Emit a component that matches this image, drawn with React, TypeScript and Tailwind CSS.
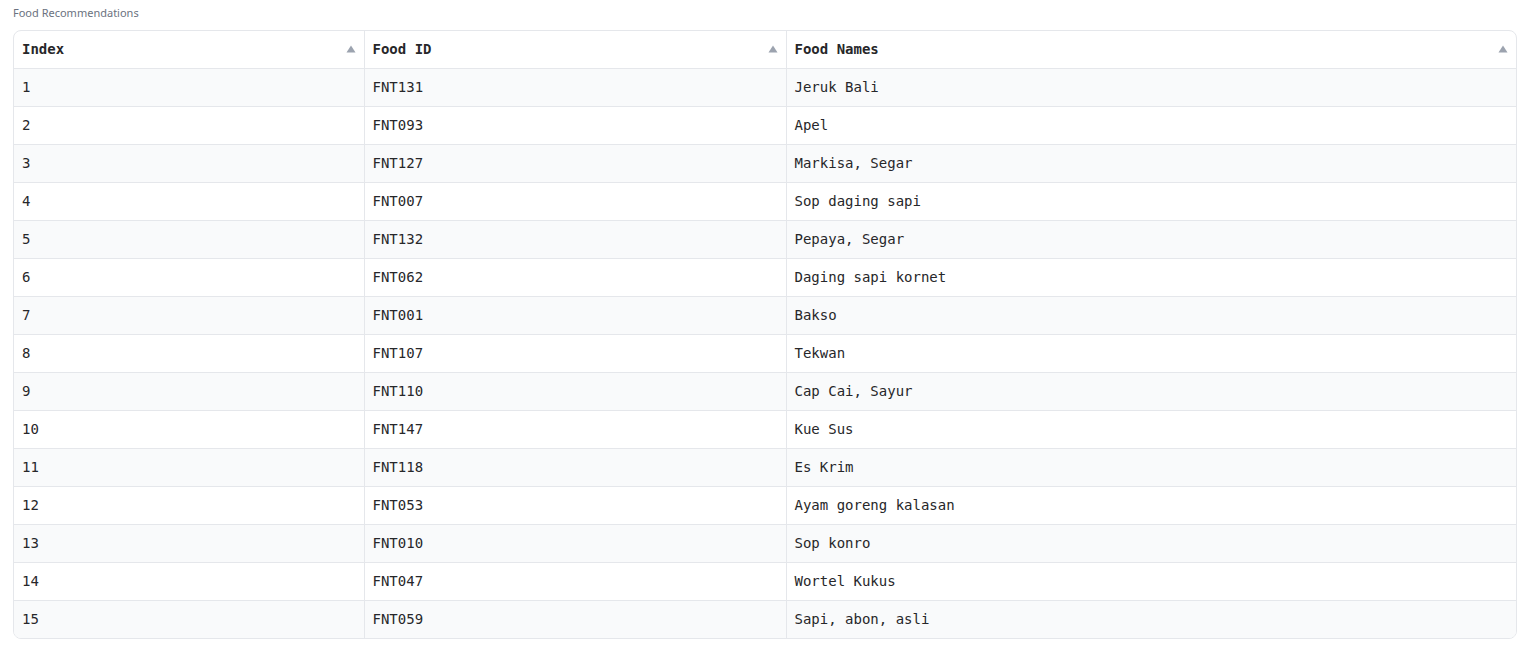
const rows: [string, string][] = [
  ['FNT131', 'Jeruk Bali'],
  ['FNT093', 'Apel'],
  ['FNT127', 'Markisa, Segar'],
  ['FNT007', 'Sop daging sapi'],
  ['FNT132', 'Pepaya, Segar'],
  ['FNT062', 'Daging sapi kornet'],
  ['FNT001', 'Bakso'],
  ['FNT107', 'Tekwan'],
  ['FNT110', 'Cap Cai, Sayur'],
  ['FNT147', 'Kue Sus'],
  ['FNT118', 'Es Krim'],
  ['FNT053', 'Ayam goreng kalasan'],
  ['FNT010', 'Sop konro'],
  ['FNT047', 'Wortel Kukus'],
  ['FNT059', 'Sapi, abon, asli'],
]

function SortArrow() {
  return (
    <svg width="10" height="8" viewBox="0 0 10 8" className="shrink-0">
      <path d="M5 0.5 L9.5 7.5 L0.5 7.5 Z" fill="#9ca3af" />
    </svg>
  )
}

function HeadCell({ label, last }: { label: string; last?: boolean }) {
  return (
    <th className={`h-[37px] px-2 text-left font-bold ${last ? '' : 'border-r border-[#e5e7eb]'}`}>
      <div className="flex items-center justify-between">
        <span>{label}</span>
        <SortArrow />
      </div>
    </th>
  )
}

export default function App() {
  return (
    <div className="bg-white w-[1525px] h-[647px] px-[13px] pt-[5px]">
      <div className="text-[11px] leading-[16px] text-[#6b7280] mb-[9px]" style={{ fontFamily: '"Source Sans Pro", "Noto Sans", sans-serif' }}>
        Food Recommendations
      </div>
      <div className="w-[1504px] border border-[#e5e7eb] rounded-lg overflow-hidden">
        <table
          className="w-full table-fixed border-collapse text-[14px] text-[#27272a]"
          style={{ fontFamily: '"DejaVu Sans Mono", "Liberation Mono", monospace' }}
        >
          <colgroup>
            <col className="w-[350px]" />
            <col className="w-[422px]" />
            <col />
          </colgroup>
          <thead>
            <tr>
              <HeadCell label="Index" />
              <HeadCell label="Food ID" />
              <HeadCell label="Food Names" last />
            </tr>
          </thead>
          <tbody>
            {rows.map(([id, name], i) => (
              <tr key={id} className={`h-[38px] border-t border-[#e5e7eb] ${i % 2 === 0 ? 'bg-[#f9fafb]' : 'bg-white'}`}>
                <td className="px-2 border-r border-[#e5e7eb]">{i + 1}</td>
                <td className="px-2 border-r border-[#e5e7eb]">{id}</td>
                <td className="px-2">{name}</td>
              </tr>
            ))}
          </tbody>
        </table>
      </div>
    </div>
  )
}
